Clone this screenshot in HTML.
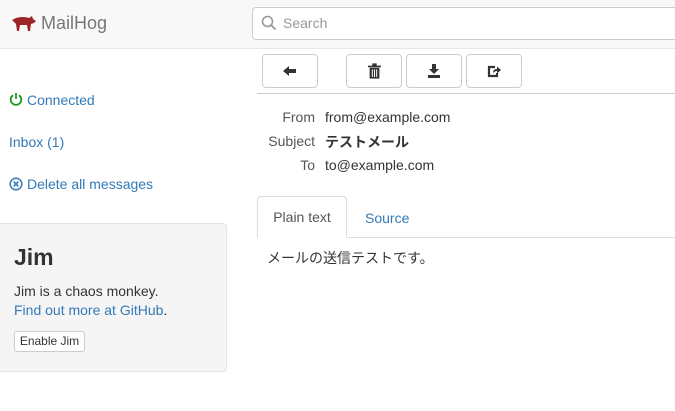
<!DOCTYPE html>
<html><head><meta charset="utf-8"><style>
*{box-sizing:border-box}
body{margin:0;width:675px;height:411px;overflow:hidden;background:#fff;font-family:"Liberation Sans","Noto Sans CJK JP",sans-serif;font-size:14px;color:#333;position:relative}
.a{position:absolute}
a{color:#337ab7;text-decoration:none}
.hdr{left:0;top:0;width:675px;height:49px;background:#f8f8f8;border-bottom:1px solid #e7e7e7}
.btn{position:absolute;top:54px;width:56px;height:34px;border:1px solid #ccc;border-radius:4px;background:#fff;display:flex;align-items:center;justify-content:center}
.lbl{position:absolute;right:360px;color:#555;text-align:right}
.val{position:absolute;left:325px}
</style></head><body>
<div class="a hdr"></div>
<svg class="a" style="left:11px;top:15px" width="25" height="18" viewBox="0 0 25 18"><path d="M1 5 L5 3 Q12 1 18 3 L21 1 L22 4 L25 6 L23 8 L20 9 L19 16 L17 16 L16 10 L9 10 L8 16 L6 16 L5 9 L3 7 Z" fill="#9c2626"/></svg>
<div class="a" style="left:41px;top:13px;font-size:18px;color:#777">MailHog</div>
<div class="a" style="left:252px;top:7px;width:440px;height:33px;border:1px solid #ccc;border-radius:4px;background:#fff"></div>
<svg class="a" style="left:261px;top:15px" width="16" height="16" viewBox="0 0 16 16"><circle cx="6.5" cy="6.5" r="5" fill="none" stroke="#999" stroke-width="1.6"/><path d="M10 10 L14.5 14.5" stroke="#999" stroke-width="1.8"/></svg>
<div class="a" style="left:283px;top:15px;color:#999">Search</div>

<svg class="a" style="left:9px;top:92px" width="14" height="14" viewBox="0 0 14 14"><path d="M4 3.2 A5.3 5.3 0 1 0 10 3.2" fill="none" stroke="#1a9a1a" stroke-width="1.8"/><path d="M7 1 V7" stroke="#1a9a1a" stroke-width="1.8"/></svg>
<a class="a" style="left:27px;top:92px">Connected</a>
<a class="a" style="left:9px;top:134px">Inbox (1)</a>
<svg class="a" style="left:9px;top:177px" width="14" height="14" viewBox="0 0 14 14"><circle cx="7" cy="7" r="5.8" fill="none" stroke="#337ab7" stroke-width="1.5"/><path d="M4.6 4.6 L9.4 9.4 M9.4 4.6 L4.6 9.4" stroke="#337ab7" stroke-width="1.6"/></svg>
<a class="a" style="left:27px;top:176px">Delete all messages</a>

<div class="a" style="left:-5px;top:223px;width:232px;height:149px;background:#f5f5f5;border:1px solid #e3e3e3;border-radius:4px"></div>
<div class="a" style="left:14px;top:244px;font-size:23px;font-weight:bold">Jim</div>
<div class="a" style="left:14px;top:283px">Jim is a chaos monkey.</div>
<div class="a" style="left:14px;top:302px"><a>Find out more at GitHub</a>.</div>
<div class="a" style="left:14px;top:331px;width:71px;height:21px;border:1px solid #ccc;border-radius:3px;background:#fff;font-size:12px;text-align:center;line-height:19px">Enable Jim</div>

<div class="btn" style="left:262px"><svg width="14" height="12" viewBox="0 0 14 12"><path d="M0 6 L6 1 V4 H13 V8 H6 V11 Z" fill="#333"/></svg></div>
<div class="btn" style="left:346px"><svg width="13" height="16" viewBox="0 0 12 14"><path d="M0 2 H12 V3.5 H0 Z M4 0 H8 V2 H4 Z" fill="#333"/><path d="M1.5 4 H10.5 V14 H1.5 Z" fill="#333"/><path d="M4 5.5 V12.5 M6 5.5 V12.5 M8 5.5 V12.5" stroke="#fff" stroke-width="0.9"/></svg></div>
<div class="btn" style="left:406px"><svg width="14" height="14" viewBox="0 0 14 14"><path d="M5 0 H9 V5 H12 L7 10 L2 5 H5 Z M1 11 H13 V14 H1 Z" fill="#333"/></svg></div>
<div class="btn" style="left:466px"><svg width="14" height="13" viewBox="0 0 14 13"><path d="M8 2 H2 V11 H10 V8" fill="none" stroke="#333" stroke-width="2.2"/><path d="M6 8 Q6 4 10 4 V1.5 L14 5 L10 8.5 V6 Q8 6 6 8 Z" fill="#333"/></svg></div>
<div class="a" style="left:257px;top:93px;width:420px;height:1px;background:#ccc"></div>

<div class="lbl" style="top:109px">From</div><div class="val" style="top:109px">from@example.com</div>
<div class="lbl" style="top:133px">Subject</div><div class="val" style="top:132px;font-weight:bold">テストメール</div>
<div class="lbl" style="top:157px">To</div><div class="val" style="top:157px">to@example.com</div>

<div class="a" style="left:257px;top:237px;width:420px;height:1px;background:#ddd"></div>
<div class="a" style="left:257px;top:196px;width:90px;height:42px;border:1px solid #ddd;border-bottom-color:#fff;border-radius:4px 4px 0 0;background:#fff;color:#555;text-align:center;line-height:41px">Plain text</div>
<a class="a" style="left:365px;top:210px">Source</a>
<div class="a" style="left:267px;top:248px">メールの送信テストです。</div>
</body></html>
